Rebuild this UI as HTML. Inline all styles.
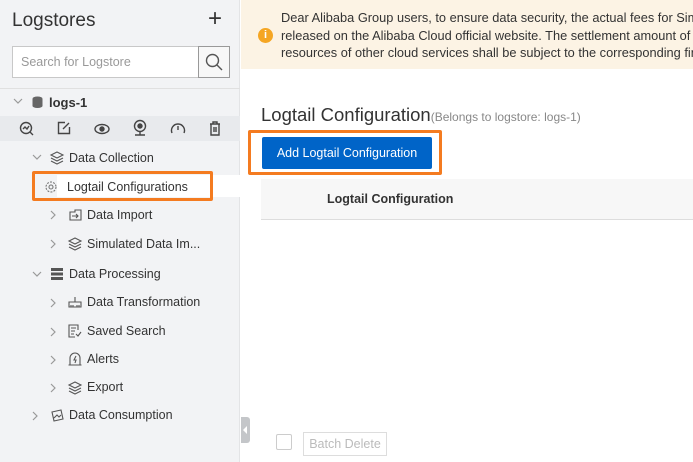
<!DOCTYPE html>
<html><head><meta charset="utf-8"><style>
*{margin:0;padding:0;box-sizing:border-box}
body{width:693px;height:462px;overflow:hidden;font-family:"Liberation Sans",sans-serif;background:#fff;position:relative;color:#333}
.sb{position:absolute;left:0;top:0;width:240px;height:462px;background:#f2f3f5;border-right:1px solid #e3e4e6}
.abs{position:absolute}
.t{font-size:12.5px;color:#333;white-space:nowrap}
svg{position:absolute;overflow:visible}
</style></head><body>
<div class="sb">
 <div class="abs" style="left:12px;top:10px;font-size:19px;color:#333">Logstores</div>
 <div class="abs" style="left:208px;top:5px;font-size:24px;color:#333;font-weight:300">+</div>
 <div class="abs" style="left:12px;top:46px;width:218px;height:32px;background:#fff;border:1px solid #c8c8c8"></div>
 <div class="abs" style="left:21px;top:55px;font-size:12.5px;color:#999">Search for Logstore</div>
 <div class="abs" style="left:198px;top:46px;width:32px;height:32px;border:1px solid #999;background:#f7f7f7"></div>
 <svg style="left:205px;top:53px" width="18" height="18"><circle cx="7.5" cy="7.5" r="6" fill="none" stroke="#555" stroke-width="1.4"/><path d="M12 12l5 5" stroke="#555" stroke-width="1.4"/></svg>
 <div class="abs" style="left:0;top:88px;width:240px;height:1px;background:#e0e0e0"></div>
 <svg style="left:13px;top:98px" width="10" height="8"><path d="M1 1l4 4 4-4" fill="none" stroke="#999" stroke-width="1.2"/></svg>
 <svg style="left:32px;top:96px" width="11" height="12"><ellipse cx="5.5" cy="2.5" rx="5" ry="2" fill="#666"/><rect x=".5" y="3" width="10" height="7" fill="#666"/><ellipse cx="5.5" cy="10" rx="5" ry="2" fill="#666"/></svg>
 <div class="abs t" style="left:49px;top:95px;font-weight:bold;font-size:13px">logs-1</div>
 <div class="abs" style="left:0;top:116px;width:240px;height:25px;background:#e8eaed"></div>
 <svg style="left:19px;top:121px" width="16" height="16" fill="none" stroke="#444" stroke-width="1.4"><circle cx="7" cy="7" r="5.5"/><path d="M11 11l3 3M4 8l2-2 2 2 2-3"/></svg>
 <svg style="left:57px;top:121px" width="14" height="14" fill="none" stroke="#444" stroke-width="1.4"><path d="M8 1.5H1.5v11h11V6M6 8l6-6"/></svg>
 <svg style="left:94px;top:123px" width="16" height="12" fill="none" stroke="#444" stroke-width="1.4"><ellipse cx="8" cy="6" rx="7" ry="4.5"/><circle cx="8" cy="6" r="2" fill="#444"/></svg>
 <svg style="left:133px;top:120px" width="14" height="16" fill="none" stroke="#444" stroke-width="1.4"><circle cx="7" cy="6" r="5.5"/><circle cx="7" cy="6" r="2" fill="#444"/><path d="M2 15h10M7 12v3"/></svg>
 <svg style="left:170px;top:121px" width="16" height="14" fill="none" stroke="#444" stroke-width="1.4"><path d="M2 12A6.5 6.5 0 1 1 14 12M8 5v4"/></svg>
 <svg style="left:209px;top:121px" width="12" height="15" fill="none" stroke="#444" stroke-width="1.4"><path d="M1 3h10M4 3V1h4v2M2 3v11h8V3M5 6v5M7 6v5"/></svg>

 <svg style="left:32px;top:154px" width="10" height="8"><path d="M1 1l4 4 4-4" fill="none" stroke="#999" stroke-width="1.2"/></svg>
 <svg style="left:50px;top:151px" width="14" height="13" fill="none" stroke="#555" stroke-width="1.1"><path d="M7 1l6 3-6 3-6-3zM1 7l6 3 6-3M1 10l6 3 6-3"/></svg>
 <div class="abs t" style="left:69px;top:151px">Data Collection</div>

 <div class="abs" style="left:57px;top:175px;width:183px;height:22px;background:#fff"></div>
 <svg style="left:45px;top:181px" width="12" height="12" fill="none" stroke="#777" stroke-width="1.1"><circle cx="6" cy="6" r="2"/><circle cx="6" cy="6" r="5" stroke-dasharray="2 1.2"/></svg>
 <div class="abs t" style="left:67px;top:180px">Logtail Configurations</div>
 <div class="abs" style="left:32px;top:171px;width:181px;height:30px;border:3px solid #f47b20;border-radius:2px"></div>

 <svg style="left:50px;top:210px" width="8" height="10"><path d="M1 1l4 4-4 4" fill="none" stroke="#999" stroke-width="1.2"/></svg>
 <svg style="left:69px;top:209px" width="13" height="12" fill="none" stroke="#555" stroke-width="1.1"><path d="M1 3h5v-2h6v10H1zM3 7h6M7 5l2 2-2 2"/></svg>
 <div class="abs t" style="left:87px;top:208px">Data Import</div>

 <svg style="left:50px;top:239px" width="8" height="10"><path d="M1 1l4 4-4 4" fill="none" stroke="#999" stroke-width="1.2"/></svg>
 <svg style="left:68px;top:237px" width="14" height="13" fill="none" stroke="#555" stroke-width="1.1"><path d="M7 1l6 3-6 3-6-3zM1 7l6 3 6-3M1 10l6 3 6-3"/></svg>
 <div class="abs t" style="left:87px;top:237px">Simulated Data Im...</div>

 <svg style="left:32px;top:271px" width="10" height="8"><path d="M1 1l4 4 4-4" fill="none" stroke="#999" stroke-width="1.2"/></svg>
 <svg style="left:51px;top:268px" width="12" height="12" fill="#555"><rect x="0" y="0" width="12" height="3"/><rect x="0" y="4.5" width="12" height="3"/><rect x="0" y="9" width="12" height="3"/></svg>
 <div class="abs t" style="left:69px;top:267px">Data Processing</div>

 <svg style="left:50px;top:298px" width="8" height="10"><path d="M1 1l4 4-4 4" fill="none" stroke="#999" stroke-width="1.2"/></svg>
 <svg style="left:68px;top:296px" width="14" height="12" fill="none" stroke="#555" stroke-width="1.1"><path d="M1 6h12v5H1zM7 1v5M3 9v2M5 9v2M9 9v2M11 9v2"/></svg>
 <div class="abs t" style="left:87px;top:295px">Data Transformation</div>

 <svg style="left:50px;top:327px" width="8" height="10"><path d="M1 1l4 4-4 4" fill="none" stroke="#999" stroke-width="1.2"/></svg>
 <svg style="left:68px;top:324px" width="14" height="14" fill="none" stroke="#555" stroke-width="1.1"><path d="M10 6V1H1v12h6M3 4h5M3 7h4M3 10h3M8 10l2 2 3-4"/></svg>
 <div class="abs t" style="left:87px;top:324px">Saved Search</div>

 <svg style="left:50px;top:355px" width="8" height="10"><path d="M1 1l4 4-4 4" fill="none" stroke="#999" stroke-width="1.2"/></svg>
 <svg style="left:68px;top:352px" width="14" height="14" fill="none" stroke="#555" stroke-width="1.1"><path d="M2 13V6a5 5 0 0 1 10 0v7M0.5 13h13M8 4L6 8h2l-1 3"/></svg>
 <div class="abs t" style="left:87px;top:352px">Alerts</div>

 <svg style="left:50px;top:383px" width="8" height="10"><path d="M1 1l4 4-4 4" fill="none" stroke="#999" stroke-width="1.2"/></svg>
 <svg style="left:68px;top:381px" width="14" height="13" fill="none" stroke="#555" stroke-width="1.1"><path d="M7 1l6 3-6 3-6-3zM1 7l6 3 6-3M1 10l6 3 6-3"/></svg>
 <div class="abs t" style="left:87px;top:380px">Export</div>

 <svg style="left:32px;top:411px" width="8" height="10"><path d="M1 1l4 4-4 4" fill="none" stroke="#999" stroke-width="1.2"/></svg>
 <svg style="left:51px;top:409px" width="13" height="12" fill="none" stroke="#555" stroke-width="1.1"><path d="M1 3l9-2 2 9-9 2zM3 9l3-3 2 2 2-2"/></svg>
 <div class="abs t" style="left:69px;top:408px">Data Consumption</div>
</div>
<div class="abs" style="left:241px;top:417px;width:9px;height:26px;background:#c4c6c9;border-radius:0 3px 3px 0"></div>
<svg style="left:243px;top:426px" width="5" height="8"><path d="M4 0v8L0 4z" fill="#fff"/></svg>

<div class="abs" style="left:241px;top:0;width:452px;height:69px;background:#fcf3e4;overflow:hidden">
 <div class="abs" style="left:17px;top:28px;width:15px;height:15px;border-radius:50%;background:#f5a623;color:#fff;font-size:11px;font-weight:bold;text-align:center;line-height:15px">i</div>
 <div class="abs" style="left:40px;top:9px;font-size:12.8px;line-height:17.7px;color:#333;white-space:nowrap">Dear Alibaba Group users, to ensure data security, the actual fees for Simple Log<br>released on the Alibaba Cloud official website. The settlement amount of Alibaba<br>resources of other cloud services shall be subject to the corresponding financial</div>
</div>

<div class="abs" style="left:261px;top:104px;white-space:nowrap"><span style="font-size:18.5px;color:#333">Logtail Configuration</span><span style="font-size:12px;color:#888">(Belongs to logstore: logs-1)</span></div>
<div class="abs" style="left:262px;top:137px;width:170px;height:32px;background:#0064c8;border-radius:2px;color:#fff;font-size:12.5px;text-align:center;line-height:32px">Add Logtail Configuration</div>
<div class="abs" style="left:248px;top:130px;width:194px;height:45px;border:3px solid #f47b20;border-radius:2px"></div>

<div class="abs" style="left:261px;top:179px;width:432px;height:41px;background:#f7f7f7;border-bottom:1px solid #ddd"></div>
<div class="abs t" style="left:327px;top:192px;font-weight:bold;font-size:12.5px">Logtail Configuration</div>

<div class="abs" style="left:276px;top:434px;width:16px;height:16px;border:1px solid #ccc;border-radius:2px;background:#fff"></div>
<div class="abs" style="left:303px;top:432px;width:84px;height:24px;border:1px solid #ddd;color:#bbb;font-size:12.5px;text-align:center;line-height:22px">Batch Delete</div>
</body></html>
